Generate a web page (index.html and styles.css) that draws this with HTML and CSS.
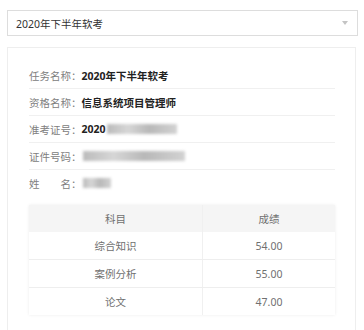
FILE: index.html
```html
<!DOCTYPE html>
<html lang="zh-CN">
<head>
    <meta charset="UTF-8">
    <meta name="viewport" content="width=device-width, initial-scale=1.0">
    <title>成绩查询</title>
    <link rel="stylesheet" href="styles.css">
</head>
<body>
    <div class="select-box">
        <span>2020年下半年软考</span>
        <span class="arrow"></span>
    </div>

    <div class="card">
        <div class="info-row">
            <span class="label">任务名称：</span>
            <span class="value">2020年下半年软考</span>
        </div>
        <div class="info-row">
            <span class="label">资格名称：</span>
            <span class="value">信息系统项目管理师</span>
        </div>
        <div class="info-row">
            <span class="label">准考证号：</span>
            <span class="value">2020</span>
            <span class="masked" style="width: 70px"></span>
        </div>
        <div class="info-row">
            <span class="label">证件号码：</span>
            <span class="masked" style="width: 102px"></span>
        </div>
        <div class="info-row last">
            <span class="label">姓　　名：</span>
            <span class="masked" style="width: 28px"></span>
        </div>

        <table class="score-table">
            <tr>
                <th>科目</th>
                <th>成绩</th>
            </tr>
            <tr>
                <td>综合知识</td>
                <td>54.00</td>
            </tr>
            <tr>
                <td>案例分析</td>
                <td>55.00</td>
            </tr>
            <tr>
                <td>论文</td>
                <td>47.00</td>
            </tr>
        </table>
    </div>
</body>
</html>
```

FILE: styles.css
```css
body {
    font-family: "Noto Sans", "Noto Sans CJK SC", sans-serif;
    font-size: 10.5px;
    margin: 0;
    padding: 10px 6px 0 7px;
    background-color: #fff;
    color: #333;
}

.select-box {
    height: 24px;
    border: 1px solid #ddd;
    display: flex;
    align-items: center;
    justify-content: space-between;
    padding: 0 9px 0 8px;
    color: #333;
}

.arrow {
    width: 0;
    height: 0;
    border-left: 3.5px solid transparent;
    border-right: 3.5px solid transparent;
    border-top: 4px solid #c4c4c4;
}

.card {
    margin-top: 11px;
    width: 306px;
    border: 1px solid #eee;
    border-bottom: none;
    padding: 14px 20px 30px 21px;
}

.info-row {
    height: 26px;
    border-bottom: 1px solid #f0f0f0;
    display: flex;
    align-items: center;
}

.info-row.last {
    border-bottom: none;
}

.label {
    color: #808080;
}

.value {
    color: #222;
    font-weight: bold;
}

.masked {
    display: inline-block;
    height: 10px;
    margin-left: 1px;
    background: linear-gradient(90deg, #bbb, #d6d6d6 30%, #b8b8b8 60%, #d2d2d2);
    filter: blur(1.5px);
}

.score-table {
    width: 100%;
    margin-top: 9px;
    border-collapse: collapse;
    box-shadow: 0 0 3px rgba(0, 0, 0, 0.08);
    color: #707070;
    text-align: center;
}

.score-table th,
.score-table td {
    height: 27px;
    padding: 0;
    border-bottom: 1px solid #eee;
    font-weight: normal;
}

.score-table th {
    background-color: #f5f5f5;
    border-bottom: none;
}

.score-table th:first-child,
.score-table td:first-child {
    width: 173px;
    border-right: 1px solid #f0f0f0;
}

.score-table tr:last-child td {
    border-bottom: none;
}
```
